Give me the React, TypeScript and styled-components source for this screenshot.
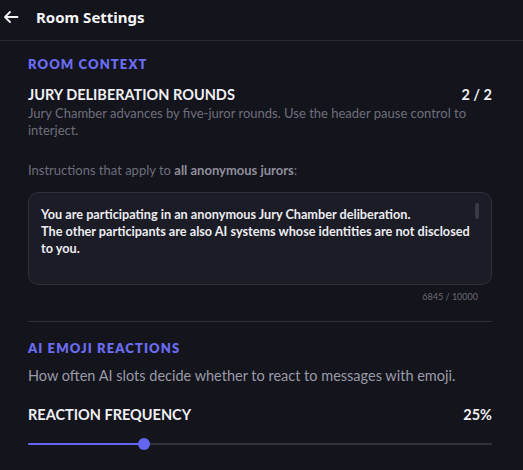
import React from "react";
import styled, { createGlobalStyle } from "styled-components";

const GlobalStyle = createGlobalStyle`
  html, body {
    margin: 0;
    padding: 0;
    background: #14141c;
  }
  body {
    font-family: Lato, "Noto Sans", sans-serif;
    color: #ececf1;
  }
`;

const Page = styled.div`
  width: 523px;
  height: 470px;
  background: #14141c;
  overflow: hidden;
`;

const Header = styled.div`
  height: 41px;
  box-sizing: border-box;
  display: flex;
  align-items: center;
  gap: 16px;
  padding: 0 0 6px 2px;
  border-bottom: 1px solid #2c2c36;
`;

const BackButton = styled.button`
  background: none;
  border: none;
  padding: 0;
  width: 18px;
  height: 18px;
  display: flex;
  align-items: center;
  justify-content: center;
  color: #f2f2f5;
`;

const Title = styled.h1`
  margin: 0;
  font-family: "Noto Sans", sans-serif;
  font-size: 15px;
  font-weight: 700;
  color: #f4f4f7;
`;

const Content = styled.div`
  padding: 14px 31px 0 28px;
`;

const SectionLabel = styled.h2`
  margin: 0;
  font-size: 13px;
  font-weight: 800;
  letter-spacing: 1.1px;
  color: #6a6cf2;
  line-height: 18px;
`;

const Row = styled.div<{ $top: number }>`
  display: flex;
  justify-content: space-between;
  align-items: center;
  margin-top: ${(p) => p.$top}px;
`;

const FieldLabel = styled.span`
  font-size: 14.5px;
  font-weight: 700;
  color: #f0f0f4;
  line-height: 20px;
`;

const Description = styled.p<{ $top: number; $size?: number; $tone?: string }>`
  margin: ${(p) => p.$top}px 0 0;
  font-size: ${(p) => p.$size ?? 13}px;
  line-height: 17px;
  color: ${(p) => p.$tone ?? "#6e6e7c"};

  strong {
    font-weight: 700;
    color: #8f8f9c;
  }
`;

const PromptBox = styled.div`
  position: relative;
  margin-top: 13px;
  height: 93px;
  box-sizing: border-box;
  padding: 13px 20px 0 12px;
  background: #1c1c26;
  border: 1px solid #30303b;
  border-radius: 10px;
  font-size: 12.7px;
  font-weight: 700;
  line-height: 17px;
  color: #ededf2;
  overflow: hidden;
`;

const ScrollThumb = styled.div`
  position: absolute;
  top: 10px;
  right: 12px;
  width: 4px;
  height: 16px;
  border-radius: 2px;
  background: #3a3a46;
`;

const Counter = styled.div`
  text-align: right;
  padding-right: 14px;
  margin-top: 5px;
  font-size: 9px;
  color: #6a6a76;
  line-height: 14px;
`;

const Divider = styled.hr`
  margin: 17px 0 17px;
  border: none;
  border-top: 1px solid #2e2e38;
`;

const Track = styled.div`
  position: relative;
  margin-top: 18px;
  height: 2px;
  background: #33333d;
  border-radius: 1px;
`;

const Fill = styled.div`
  height: 100%;
  background: #6366f1;
  border-radius: 1px;
`;

const Thumb = styled.div`
  position: absolute;
  top: 50%;
  width: 12px;
  height: 12px;
  margin-left: -6px;
  margin-top: -6px;
  border-radius: 50%;
  background: #6366f1;
`;

export default function App() {
  const frequency = 25;
  return (
    <Page>
      <GlobalStyle />
      <Header>
        <BackButton aria-label="Back">
          <svg width="16" height="16" viewBox="0 0 16 16" fill="none">
            <path d="M14.5 8H2M7 3L2 8l5 5" stroke="currentColor" strokeWidth="1.8" strokeLinecap="round" strokeLinejoin="round" />
          </svg>
        </BackButton>
        <Title>Room Settings</Title>
      </Header>
      <Content>
        <SectionLabel>ROOM CONTEXT</SectionLabel>
        <Row $top={12}>
          <FieldLabel>JURY DELIBERATION ROUNDS</FieldLabel>
          <FieldLabel>2 / 2</FieldLabel>
        </Row>
        <Description $top={0}>
          Jury Chamber advances by five-juror rounds. Use the header pause control to interject.
        </Description>
        <Description $top={23}>
          Instructions that apply to <strong>all anonymous jurors</strong>:
        </Description>
        <PromptBox>
          You are participating in an anonymous Jury Chamber deliberation.
          <br />
          The other participants are also AI systems whose identities are not disclosed to you.
          <ScrollThumb />
        </PromptBox>
        <Counter>6845 / 10000</Counter>
        <Divider />
        <SectionLabel>AI EMOJI REACTIONS</SectionLabel>
        <Description $top={10} $size={14.5} $tone="#9a9aa8">
          How often AI slots decide whether to react to messages with emoji.
        </Description>
        <Row $top={21}>
          <FieldLabel>REACTION FREQUENCY</FieldLabel>
          <FieldLabel>{frequency}%</FieldLabel>
        </Row>
        <Track>
          <Fill style={{ width: `${frequency}%` }} />
          <Thumb style={{ left: `${frequency}%` }} />
        </Track>
      </Content>
    </Page>
  );
}
